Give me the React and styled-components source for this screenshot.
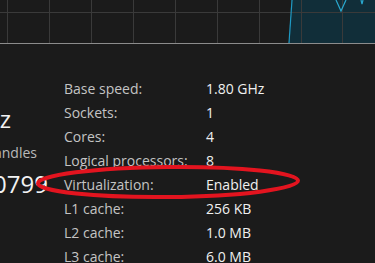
import React from 'react';
import styled, { createGlobalStyle } from 'styled-components';

const rows = [
  ['Base speed:', '1.80 GHz'],
  ['Sockets:', '1'],
  ['Cores:', '4'],
  ['Logical processors:', '8'],
  ['Virtualization:', 'Enabled'],
  ['L1 cache:', '256 KB'],
  ['L2 cache:', '1.0 MB'],
  ['L3 cache:', '6.0 MB'],
];

const gridX = [7, 49, 91, 133, 175, 217, 259, 301, 342];

const App = () => {
  return (
    <Page>
      <GlobalStyle />
      <Graph>
        <svg width='375' height='43' viewBox='0 0 375 43'>
          <path d='M289 43 L292 0 L375 0 L375 43 Z' fill='#112e39' />
          {gridX.map((x) => (
            <line key={x} x1={x + 0.5} y1='0' x2={x + 0.5} y2='43' stroke='#3a3a3a' strokeWidth='1' />
          ))}
          <line x1='0' y1='12.5' x2='375' y2='12.5' stroke='#3a3a3a' strokeWidth='1' />
          <path d='M289 43 L292 0' stroke='#1f9ac4' strokeWidth='1.2' fill='none' />
          <path d='M336 0 L341 11 L346 0' stroke='#2aa9cf' strokeWidth='1.2' fill='none' />
          <path d='M361 0 L362 4 L363 0' stroke='#2aa9cf' strokeWidth='1.2' fill='none' />
        </svg>
      </Graph>
      <Body>
        <LeftCol>
          <Clip $right={11} $gap={26}>
            <BigValue>2.19 GHz</BigValue>
          </Clip>
          <Clip $right={37} $gap={8}>
            <SmallLabel>Handles</SmallLabel>
          </Clip>
          <Clip $right={48} $gap={5}>
            <BigValue>140799</BigValue>
          </Clip>
        </LeftCol>
        <Table>
          {rows.map(([label, value]) => (
            <React.Fragment key={label}>
              <Label>{label}</Label>
              <Value>{value}</Value>
            </React.Fragment>
          ))}
        </Table>
      </Body>
      <Highlight width='375' height='263' viewBox='0 0 375 263'>
        <ellipse
          cx='168'
          cy='182'
          rx='130'
          ry='15'
          transform='rotate(-0.6 168 182)'
          fill='none'
          stroke='#e3141f'
          strokeWidth='4'
        />
      </Highlight>
    </Page>
  );
};

export default App;

const GlobalStyle = createGlobalStyle`
  html, body {
    margin: 0;
    padding: 0;
    background: #1b1b1b;
  }
`;

const Page = styled.div`
  width: 375px;
  height: 263px;
  background: #1b1b1b;
  overflow: hidden;
  font-family: 'Open Sans', 'Noto Sans', sans-serif;
  position: relative;
`;

const Graph = styled.div`
  height: 43px;
  border-bottom: 1px solid #8c8c8c;
  display: flex;
  svg {
    display: block;
  }
`;

const Body = styled.div`
  display: flex;
  padding-top: 32px;
`;

const LeftCol = styled.div`
  width: 64px;
  overflow: hidden;
  display: flex;
  flex-direction: column;
`;

// right-aligned line whose text runs off the left edge
const Clip = styled.div`
  width: ${(p) => p.$right}px;
  margin-top: ${(p) => p.$gap}px;
  display: flex;
  justify-content: flex-end;
  white-space: nowrap;
`;

const BigValue = styled.div`
  font-size: 24px;
  color: #f2f2f2;
  line-height: 34px;
`;

const SmallLabel = styled.div`
  font-size: 14px;
  color: #b9b9b9;
  line-height: 18px;
`;

const Table = styled.div`
  display: grid;
  grid-template-columns: 142px auto;
  grid-auto-rows: 24px;
  align-items: center;
  font-size: 14px;
`;

const Label = styled.div`
  color: #c4c4c4;
  white-space: nowrap;
`;

const Value = styled.div`
  color: #f0f0f0;
  white-space: nowrap;
`;

const Highlight = styled.svg`
  position: absolute;
  left: 0;
  top: 0;
  pointer-events: none;
`;
